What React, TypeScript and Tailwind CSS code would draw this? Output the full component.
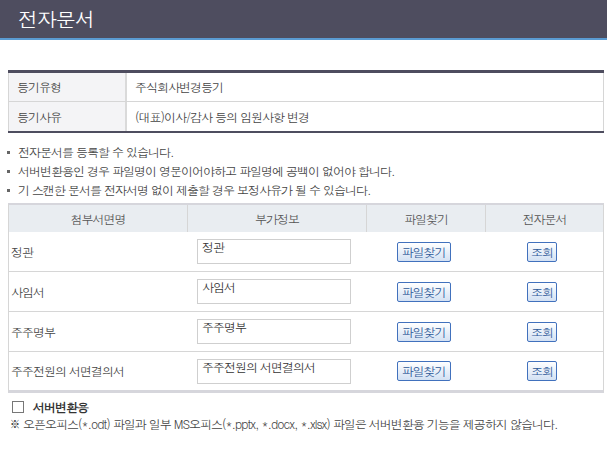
import React from "react";

const font = "font-['Dotum','Gulim','Noto_Sans_CJK_KR',sans-serif]";

const docs = ["정관", "사임서", "주주명부", "주주전원의 서면결의서"];

function BlueButton({ children, className = "" }: { children: React.ReactNode; className?: string }) {
  return (
    <button
      className={`flex h-[20px] items-center justify-center rounded-[2px] border border-[#4171bd] bg-gradient-to-b from-white to-[#d3e1f3] text-[12px] leading-none tracking-[-1px] text-[#2b5797] ${className}`}
    >
      {children}
    </button>
  );
}

export default function App() {
  return (
    <div className={`min-h-[463px] w-[607px] bg-white text-[12px] leading-[14px] tracking-[-1px] text-[#444] ${font}`}>
      {/* 타이틀 */}
      <div className="flex h-[40px] items-center border-b-2 border-[#5a9bd2] bg-[#4e4d5f] pl-[18px]">
        <h1 className="text-[20px] font-normal leading-none text-white">전자문서</h1>
      </div>

      {/* 등기 정보 */}
      <div className="ml-2 mt-[30px] w-[596px] border-t-[3px] border-b-2 border-t-[#4e4d5f] border-b-[#4e4d5f]">
        {[
          ["등기유형", "주식회사변경등기"],
          ["등기사유", "(대표)이사/감사 등의 임원사항 변경"],
        ].map(([label, value], i) => (
          <div
            key={label}
            className={`flex h-[29px] border-x border-x-[#d6d6d6] ${i === 0 ? "border-b border-b-[#d6d6d6]" : ""}`}
          >
            <div className="flex w-[118px] items-center border-r-2 border-r-[#dadada] bg-[#f4f4f6] pl-[8px]">
              {label}
            </div>
            <div className="flex items-center pl-[8px]">{value}</div>
          </div>
        ))}
      </div>

      {/* 안내 */}
      <ul className="mt-[10px] flex flex-col gap-[1px] pl-[7px]">
        {[
          "전자문서를 등록할 수 있습니다.",
          "서버변환용인 경우 파일명이 영문이어야하고 파일명에 공백이 없어야 합니다.",
          "기 스캔한 문서를 전자서명 없이 제출할 경우 보정사유가 될 수 있습니다.",
        ].map((t) => (
          <li key={t} className="flex h-[18px] items-center gap-[8px]">
            <span className="h-[3px] w-[3px] bg-[#666]" />
            <span>{t}</span>
          </li>
        ))}
      </ul>

      {/* 첨부서면 목록 */}
      <div className="ml-2 mt-[4px] w-[596px] border-x border-t-2 border-b-[3px] border-x-[#d6d6d6] border-t-[#d6d6dc] border-b-[#d6d6dc]">
        <div className="grid h-[27px] grid-cols-[179px_179px_119px_1fr] bg-[#e9edf1] text-[#555]">
          {["첨부서면명", "부가정보", "파일찾기", "전자문서"].map((h, i) => (
            <div
              key={h}
              className={`flex items-center justify-center ${i < 3 ? "border-r border-r-[#d6d6d6]" : ""}`}
            >
              {h}
            </div>
          ))}
        </div>
        {docs.map((d, i) => (
          <div
            key={d}
            className={`grid grid-cols-[179px_179px_119px_1fr] items-center ${
              i < docs.length - 1 ? "h-[40px] border-b border-b-[#d6d6d6]" : "h-[38px]"
            }`}
          >
            <div className="pl-[2px] text-[#444]">{d}</div>
            <div className="pl-[9px]">
              <div className="h-[25px] w-[154px] border border-[#cfcfcf] pl-[4px] pt-[1px] leading-[12px] text-[#333]">
                {d}
              </div>
            </div>
            <div className="flex justify-center pr-[6px]">
              <BlueButton className="w-[54px]">파일찾기</BlueButton>
            </div>
            <div className="flex justify-center pr-[5px]">
              <BlueButton className="w-[30px]">조회</BlueButton>
            </div>
          </div>
        ))}
      </div>

      {/* 서버변환 */}
      <div className="mt-[7px] flex h-[14px] items-center gap-[9px] pl-[12px]">
        <span className="h-[12px] w-[12px] border border-[#777] bg-white" />
        <span className="font-bold text-[#333]">서버변환용</span>
      </div>
      <p className="mt-[3px] pl-[9px] text-[#444]">
        ※ 오픈오피스(*.odt) 파일과 일부 MS오피스(*.pptx, *.docx, *.xlsx) 파일은 서버변환용 기능을 제공하지 않습니다.
      </p>
    </div>
  );
}
